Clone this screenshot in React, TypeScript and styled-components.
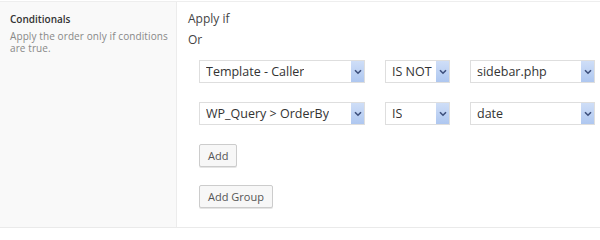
import styled, { createGlobalStyle } from 'styled-components'

const GlobalStyle = createGlobalStyle`
	html, body {
		margin: 0;
		padding: 0;
		background: #ffffff;
	}
	body {
		font-family: 'Open Sans', 'Noto Sans', sans-serif;
		color: #333;
	}
`

type Condicion = {
	campo: string
	operador: string
	valor: string
}

const condiciones: Condicion[] = [
	{ campo: 'Template - Caller', operador: 'IS NOT', valor: 'sidebar.php' },
	{ campo: 'WP_Query > OrderBy', operador: 'IS', valor: 'date' },
]

function Chevron() {
	return (
		<svg width='8' height='6' viewBox='0 0 8 6'>
			<path d='M1 1.2 L4 4.2 L7 1.2' fill='none' stroke='#3d4f7c' strokeWidth='1.6' />
		</svg>
	)
}

function Selector({ valor, ancho }: { valor: string; ancho: number }) {
	return (
		<SelectBox $ancho={ancho}>
			<span>{valor}</span>
			<ArrowBox>
				<Chevron />
			</ArrowBox>
		</SelectBox>
	)
}

export default function App() {
	return (
		<>
			<GlobalStyle />
			<FormTable>
				<LabelCell>
					<Titulo>Conditionals</Titulo>
					<Descripcion>Apply the order only if conditions are true.</Descripcion>
				</LabelCell>
				<FieldCell>
					<Encabezado>Apply if</Encabezado>
					<Encabezado $espacio={21}>Or</Encabezado>
					<Grupo>
						{condiciones.map(c => (
							<FilaCondicion key={c.campo}>
								<Selector valor={c.campo} ancho={166} />
								<Selector valor={c.operador} ancho={65} />
								<Selector valor={c.valor} ancho={125} />
							</FilaCondicion>
						))}
						<Boton>Add</Boton>
					</Grupo>
					<Boton>Add Group</Boton>
				</FieldCell>
			</FormTable>
		</>
	)
}

const FormTable = styled.div`
	display: grid;
	grid-template-columns: 177px 1fr;
	margin-top: 1px;
	border-top: 1px solid #eeeeee;
	border-bottom: 1px solid #eaeaea;
	height: 227px;
	box-sizing: border-box;
`

const LabelCell = styled.div`
	background: #f9f9f9;
	border-right: 1px solid #ececec;
	padding: 9px 0 0 10px;
`

const Titulo = styled.div`
	font-size: 10px;
	font-weight: 600;
	color: #333;
	line-height: 16px;
	margin-bottom: 3px;
`

const Descripcion = styled.div`
	font-size: 10px;
	letter-spacing: 0.1px;
	color: #888;
	line-height: 12px;
	width: 160px;
`

const FieldCell = styled.div`
	padding: 9px 0 0 11px;
`

const Encabezado = styled.div<{ $espacio?: number }>`
	font-size: 12px;
	color: #444;
	line-height: 15px;
	margin-top: ${({ $espacio }) => ($espacio ? $espacio - 15 : 0)}px;
`

const Grupo = styled.div`
	padding: 13px 0 0 11px;
	display: flex;
	flex-direction: column;
	align-items: flex-start;
	gap: 19px;
	margin-bottom: 17px;
`

const FilaCondicion = styled.div`
	display: flex;
	gap: 20px;
`

const SelectBox = styled.div<{ $ancho: number }>`
	width: ${({ $ancho }) => $ancho}px;
	height: 23px;
	box-sizing: border-box;
	border: 1px solid #dedede;
	background: #fff;
	display: flex;
	align-items: center;
	justify-content: space-between;
	font-size: 12.5px;
	color: #333;
	padding-left: 6px;

	span {
		white-space: nowrap;
		overflow: hidden;
	}
`

const ArrowBox = styled.div`
	width: 13px;
	height: 100%;
	flex-shrink: 0;
	background: linear-gradient(#cfdef7, #aec7f0);
	display: flex;
	align-items: center;
	justify-content: center;
`

const Boton = styled.button`
	font-family: inherit;
	font-size: 11px;
	color: #555;
	background: #f7f7f7;
	border: 1px solid #cccccc;
	border-radius: 2px;
	box-shadow: 0 1px 0 #e5e5e5;
	height: 23px;
	padding: 0 8px;
	cursor: pointer;
	line-height: 21px;

	${FieldCell} > & {
		margin-left: 11px;
	}
`
